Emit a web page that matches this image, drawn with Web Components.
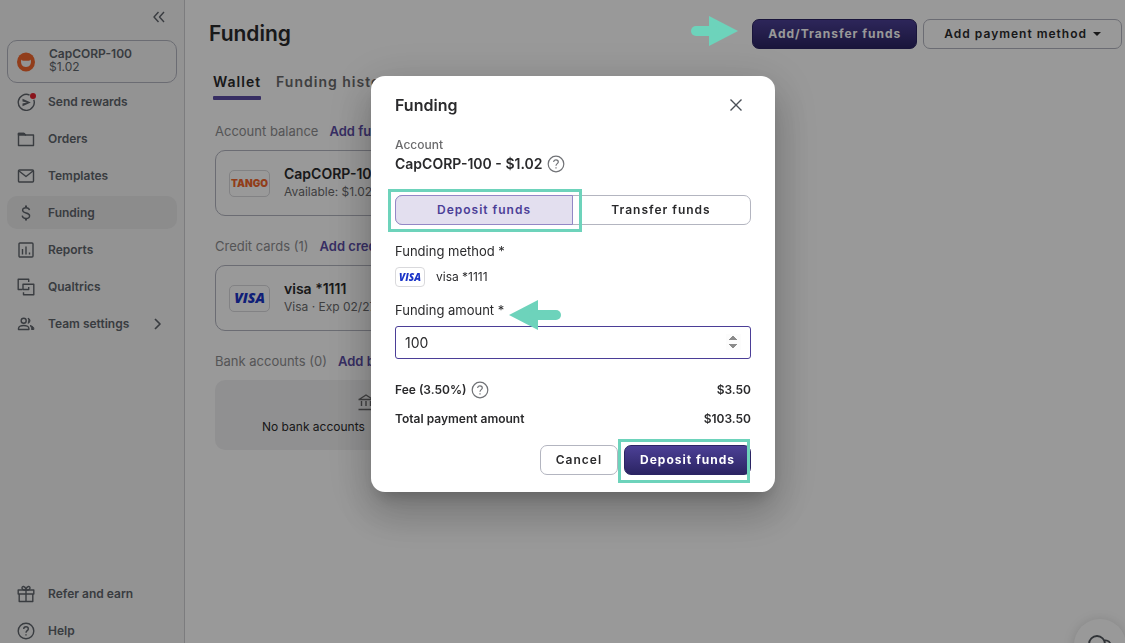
<!DOCTYPE html>
<html lang="en">
<head>
<meta charset="utf-8">
<meta name="viewport" content="width=device-width, initial-scale=1">
<title>Funding</title>
<style>
  :root {
    --ink: #2a2a2c;
    --muted: #6a6a6c;
    --faint: #8d8d90;
    --nav: #60656c;
    --brand: #4b3e97;
    --link: #5c4da6;
    --line: #b3b5c0;
    --mark: #6dd3bb;
  }
  html, body { margin: 0; height: 100%; overflow: hidden; background: #fff; }
  body { font: 400 13px/18px Inter, "Open Sans", sans-serif; color: var(--ink); }
</style>
</head>
<body>
<app-shell>
  <side-nav slot="side">
    <account-chip slot="account" name="CapCORP-100" balance="$1.02"></account-chip>
    <nav-item icon="send" alert>Send rewards</nav-item>
    <nav-item icon="folder">Orders</nav-item>
    <nav-item icon="mail">Templates</nav-item>
    <nav-item icon="dollar" active>Funding</nav-item>
    <nav-item icon="chart">Reports</nav-item>
    <nav-item icon="link">Qualtrics</nav-item>
    <nav-item icon="team" expandable>Team settings</nav-item>
    <nav-item slot="footer" icon="gift">Refer and earn</nav-item>
    <nav-item slot="footer" icon="help">Help</nav-item>
  </side-nav>
  <page-header>
    Funding
    <app-button slot="actions" primary>Add/Transfer funds</app-button>
    <app-button slot="actions" menu>Add payment method</app-button>
  </page-header>
  <tab-bar></tab-bar>
  <wallet-section label="Account balance" action="Add funds">
    <payment-card name="CapCORP-100" detail="Available: $1.02"><brand-badge brand="tango"></brand-badge></payment-card>
  </wallet-section>
  <wallet-section label="Credit cards (1)" action="Add credit">
    <payment-card name="visa *1111" detail="Visa · Exp 02/27"><brand-badge brand="visa"></brand-badge></payment-card>
  </wallet-section>
  <wallet-section label="Bank accounts (0)" action="Add bank">
    <empty-card>No bank accounts</empty-card>
  </wallet-section>
</app-shell>
<chat-launcher></chat-launcher>
<modal-layer>
  <funding-dialog></funding-dialog>
</modal-layer>
<pointer-arrow place="header"></pointer-arrow>

<script>
const ICONS = {
  send: '<path d="M12.600 2.100A8 8 0 1 0 16.800 6.700"/><path d="M5.500 5.800 13.800 9.500 5.500 13.200v-2.700l4.500-1-4.500-1z" fill="currentColor" stroke="none"/>',
  folder: '<path d="M1.500 3.500h5.500l1.500 1.500h8v10.500h-15z"/><path d="M1.500 3.500h5.500l1.500 1.500h-7z" fill="currentColor"/>',
  mail: '<rect x="1.500" y="3" width="15" height="12" rx="1"/><path d="m2 4 7 5.500L16 4"/>',
  dollar: '<path d="M12.500 6.200C12.200 4.500 10.800 3.700 9 3.700c-2 0-3.400 1-3.400 2.600C5.600 10 12.600 8 12.600 11.800c0 1.700-1.500 2.700-3.600 2.700s-3.500-1-3.800-2.800"/><path d="M9 1.500v2M9 14.500v2" stroke-width="2"/>',
  chart: '<rect x="2" y="2" width="14" height="14" rx="1"/><path d="M5.500 8v5.500M9 5.500v8M12.500 11.500v2"/>',
  link: '<path d="M5.500 11.500H1.200V1.200h10.500V4M6 11.800V6.200h10.800v10.500H6.500v-2.500"/><path d="M6 11.500h5.700V9"/>',
  team: '<circle cx="6.700" cy="5.700" r="2.500"/><path d="M1.500 14.500v-1c0-2 3-3 5.200-3s5.200 1 5.200 3v1z"/><path d="M11 3.100a2.700 2.700 0 0 1 0 5.200c1-1.500 1-3.700 0-5.200zM13 10.500c2 .4 3.800 1.300 3.800 3v1h-2.300v-1c0-1.200-.5-2.200-1.500-3z" fill="currentColor" stroke-width="1"/>',
  gift: '<path d="M1.200 5h15.600v4H1.200zM2.200 9v7.500h13.600V9M9 5v11.500"/><path d="M9 5C7 5 5 4.500 5 2.900 5 .8 8 .8 9 4.500 10 .8 13 .8 13 2.900 13 4.500 11 5 9 5z"/>',
  help: '<circle cx="9" cy="9" r="7.800"/><path d="M6.700 7.100C6.700 5.700 7.700 4.800 9 4.800s2.300.9 2.300 2.100C11.300 8.600 9 8.700 9 10.700"/><path d="M9 12.300v1.300"/>',
  bank: '<path d="M2 6.500 9 2l7 4.500M1.500 16.500h15M4.500 8v5M9 8v5M13.500 8v5M1.500 6.500h15"/>',
  right: '<path d="m6 4 5 5-5 5" stroke-width="1.700"/>',
  collapse: '<path d="M8.500 4 4 9l4.500 5M14 4 9.500 9l4.500 5"/>',
  close: '<path d="m3.500 3.500 11 11M14.500 3.500l-11 11"/>'
};
const icon = (name, size = 18) =>
  `<svg width="${size}" height="${size}" viewBox="0 0 18 18" fill="none" stroke="currentColor" stroke-width="1.400" stroke-linejoin="round" aria-hidden="true">${ICONS[name]}</svg>`;

function define(tag, render) {
  customElements.define(tag, class extends HTMLElement {
    connectedCallback() {
      if (this.shadowRoot) return;
      this.attachShadow({ mode: 'open' }).innerHTML =
        '<style>*{box-sizing:border-box}svg{display:block;flex:none}button,input{font:inherit;color:inherit}</style>' + render(this);
    }
  });
}

define('app-shell', () => `
  <style>
    :host { display: grid; grid-template-columns: 185px 1fr; height: 100vh; }
    main { padding: 19px 3px 0 24px; min-width: 0; }
  </style>
  <slot name="side"></slot><main><slot></slot></main>`);

define('side-nav', () => `
  <style>
    :host { display: flex; flex-direction: column; height: 100vh; box-sizing: border-box; padding: 8px 7px 0; background: #f5f5f5; border-right: 1px solid #cfcfd2; overflow: hidden; }
    .collapse { align-self: flex-end; margin: 0 9px 14px 0; padding: 0; border: 0; background: none; color: var(--nav); }
    nav { display: flex; flex-direction: column; gap: 4px; margin-top: 2px; }
    .footer { margin: auto 0 -4px; }
  </style>
  <button class="collapse" aria-label="Collapse menu">${icon('collapse')}</button>
  <slot name="account"></slot>
  <nav><slot></slot></nav>
  <nav class="footer" aria-label="More"><slot name="footer"></slot></nav>`);

define('account-chip', el => `
  <style>
    :host { display: block; }
    button { display: flex; align-items: center; gap: 14px; width: 100%; height: 43px; padding: 0 9px; border: 1px solid var(--line); border-radius: 10px; background: none; text-align: left; color: var(--nav); }
    span { display: block; font-size: 12px; line-height: 13px; }
    .text { padding-bottom: 3px; }
    .name { font-weight: 600; }
  </style>
  <button>
    <svg width="18" height="20" viewBox="0 0 18 20" aria-hidden="true"><ellipse cx="9" cy="10" rx="9" ry="9.500" fill="#f2672d"/><path d="M4.200 7.500c1 1.500 2.500 1.200 4.800 1.200s3.800.3 4.800-1.200c.8 4.500-1 7.500-4.800 7.500s-5.600-3-4.800-7.500z" fill="#f5f5f5"/></svg>
    <span class="text"><span class="name">${el.getAttribute('name')}</span><span>${el.getAttribute('balance')}</span></span>
  </button>`);

define('nav-item', el => `
  <style>
    :host { display: block; }
    a { position: relative; display: flex; align-items: center; gap: 13px; height: 33px; padding: 0 10px; border-radius: 10px; color: var(--nav); font-weight: 600; font-size: 12px; text-decoration: none; }
    :host([active]) a { background: #e9e9ea; }
    .more { margin-left: auto; }
    .dot { position: absolute; left: 23px; top: 8px; width: 6px; height: 6px; border-radius: 50%; background: #e5202e; }
  </style>
  <a href="#" ${el.hasAttribute('active') ? 'aria-current="page"' : ''}>${icon(el.getAttribute('icon'))}<slot></slot>
  ${el.hasAttribute('alert') ? '<i class="dot"></i>' : ''}${el.hasAttribute('expandable') ? `<span class="more">${icon('right')}</span>` : ''}</a>`);

define('page-header', () => `
  <style>
    :host { display: flex; align-items: center; gap: 6px; height: 30px; }
    h1 { margin: 0 auto 0 0; font-size: 21px; line-height: 30px; font-weight: 600; }
  </style>
  <h1><slot></slot></h1><slot name="actions"></slot>`);

define('app-button', el => `
  <style>
    :host { display: block; }
    button { display: flex; align-items: center; gap: 6px; height: 30px; padding: 0 15px; border: 1px solid var(--line); border-radius: 7px; background: #fff; font-size: 12px; font-weight: 600; letter-spacing: 1px; white-space: nowrap; }
    :host([menu]) button { padding: 0 20px; }
    :host([primary]) button { border-color: #2b2463; background: linear-gradient(#4c4096, #2b2463); color: #fff; font-weight: 700; }
  </style>
  <button type="button"><slot></slot>${el.hasAttribute('menu') ? '<svg width="8" height="4" viewBox="0 0 8 4" aria-hidden="true"><path d="M0 0h8L4 4z" fill="currentColor"/></svg>' : ''}</button>`);

define('tab-bar', () => `
  <style>
    :host { display: flex; gap: 15px; margin: 21px 0 0 4px; padding-bottom: 1px; }
    button { height: 30px; padding: 2px 0 8px; border: 0; background: none; color: var(--muted); font-size: 14px; font-weight: 600; line-height: 20px; letter-spacing: 1px; }
    [aria-selected=true] { color: var(--ink); }
    [aria-selected=true]::after { content: ""; display: block; height: 4px; margin-top: 4px; border-radius: 1px; background: var(--link); }
  </style>
  <button role="tab" aria-selected="true">Wallet</button><button role="tab" aria-selected="false">Funding history</button>`);

define('wallet-section', el => `
  <style>
    :host { display: block; width: 302px; margin: 21px 0 0 6px; }
    header { display: flex; gap: 11px; margin-bottom: 10px; color: var(--faint); }
    a { color: var(--link); font-weight: 600; text-decoration: none; }
  </style>
  <header><span>${el.getAttribute('label')}</span><a href="#">${el.getAttribute('action')}</a></header><slot></slot>`);

define('payment-card', el => `
  <style>
    :host { display: flex; align-items: center; gap: 14px; height: 66px; box-sizing: border-box; padding: 0 13px; border: 1px solid var(--line); border-radius: 10px; }
    b, span { display: block; }
    b { font-weight: 600; font-size: 14px; }
    span { color: var(--muted); font-size: 12px; }
  </style>
  <slot></slot><div><b>${el.getAttribute('name')}</b><span>${el.getAttribute('detail')}</span></div>`);

define('brand-badge', el => {
  const tango = el.getAttribute('brand') === 'tango';
  return `
  <style>
    :host { display: flex; align-items: center; justify-content: center; flex: none; width: 41px; height: 27px; box-sizing: border-box; border: 1px solid #d9d9dc; border-radius: 5px; font: italic 800 14px/18px "Open Sans", sans-serif; color: #1a34c8; }
    :host([brand=tango]) { font: 900 10px/14px Inter, sans-serif; color: #f2672d; }
    :host([small]) { width: 30px; height: 20px; font-size: 10px; border-radius: 4px; }
  </style>
  <span>${tango ? 'TANGO' : 'VISA'}</span>`;
});

define('empty-card', () => `
  <style>
    :host { display: flex; flex-direction: column; align-items: center; gap: 7px; height: 70px; box-sizing: border-box; padding-top: 13px; border-radius: 10px; background: #f1f1f2; }
    svg { color: var(--muted); }
    span { width: 208px; font-size: 12px; }
  </style>
  ${icon('bank')}<span><slot></slot></span>`);

define('chat-launcher', () => `
  <style>
    :host { position: fixed; right: -1px; bottom: -28px; }
    button { display: grid; place-items: center; width: 52px; height: 52px; padding: 0; border: 0; border-radius: 50%; background: #fff; color: #50565c; box-shadow: 0 1px 12px rgba(0,0,0,.15); }
  </style>
  <button aria-label="Open chat"><svg width="26" height="22" viewBox="0 0 26 22" fill="none" stroke="currentColor" stroke-width="1.800"><path d="M2 18v-8a8 8 0 1 1 8 8z"/><path d="M17 6.500c4-1 7 2 7 6V21h-8c-2 0-4-1-5-3"/></svg></button>`);

define('modal-layer', () => `
  <style>
    :host { position: fixed; inset: 0; display: flex; justify-content: center; align-items: flex-start; padding: 76px 0 0 21px; background: rgba(0,0,0,.4); }
  </style>
  <slot></slot>`);

define('help-tip', () => `
  <style>
    :host { display: block; }
    button { display: block; padding: 0; border: 0; background: none; color: #707276; }
    svg { stroke-width: 1.200; }
  </style>
  <button type="button" aria-label="More information">${icon('help')}</button>`);

define('pointer-arrow', el => {
  const header = el.getAttribute('place') === 'header';
  return `
  <style>
    :host { position: absolute; left: 114px; top: -1px; pointer-events: none; color: var(--mark); }
    :host([place=header]) { position: fixed; left: auto; top: 16px; right: 387px; }
  </style>
  ${header
    ? '<svg width="47" height="30" fill="currentColor" aria-hidden="true"><path d="M47 15 18 0v30z"/><rect y="10" width="28" height="10" rx="5"/></svg>'
    : '<svg width="52" height="30" fill="currentColor" aria-hidden="true"><path d="M0 15 29 0v30z"/><rect x="20" y="10" width="32" height="10" rx="5"/></svg>'}`;
});

define('mark-frame', () => `
  <style>
    :host { position: absolute; inset: -6px -9px -7px -7px; border: 3px solid var(--mark); pointer-events: none; }
    :host([around=button]) { inset: -6px 1px -8px -6px; }
  </style>`);

define('funding-dialog', () => `
  <style>
    :host { display: block; box-sizing: border-box; width: 404px; padding: 18px 24px 17px; border-radius: 14px; background: #fff; box-shadow: 0 11px 15px -7px rgba(0,0,0,.2), 0 24px 38px 3px rgba(0,0,0,.14), 0 9px 46px 8px rgba(0,0,0,.12); }
    header { display: flex; justify-content: space-between; align-items: center; height: 22px; }
    h2 { margin: 0; font-size: 16px; line-height: 22px; font-weight: 600; }
    .close { padding: 0 6px 0 0; border: 0; background: none; color: #4a4f57; }
    .muted { margin-top: 20px; color: var(--muted); font-weight: 500; font-size: 12px; }
    .line { display: flex; align-items: center; gap: 5px; height: 20px; font-size: 14px; font-weight: 600; }
    .switch { display: flex; height: 30px; margin-top: 21px; border: 1px solid var(--line); border-radius: 7px; }
    .seg { position: relative; flex: 1; margin: -1px 0 -1px -1px; }
    .seg button { width: 100%; height: 30px; padding: 0; border: 0; background: none; font-size: 12px; font-weight: 600; letter-spacing: 1px; }
    .seg button[aria-pressed=true] { border: 1px solid #9387c6; border-radius: 7px 0 0 7px; background: #e3dfef; color: var(--brand); }
    .label { display: block; position: relative; margin-top: 17px; }
    .method { display: flex; align-items: center; gap: 11px; height: 20px; margin-top: 7px; font-size: 12px; }
    .entry { margin-top: 14px; }
    input { display: block; width: 100%; height: 33px; margin-top: 7px; padding: 0 9px; border: 1px solid var(--brand); border-radius: 3px; outline: 0; background: #fff; font-size: 14px; }
    input::-webkit-inner-spin-button { opacity: 1; }
    .fee { margin-top: 21px; }
    .total { margin-top: 9px; }
    .fee, .total { font-size: 12px; }
    .value { margin-left: auto; }
    footer { display: flex; justify-content: flex-end; gap: 6px; margin-top: 16px; }
    .submit { position: relative; }
  </style>
  <section role="dialog" aria-labelledby="title">
    <header><h2 id="title">Funding</h2><button class="close" type="button" aria-label="Close">${icon('close')}</button></header>
    <div class="muted">Account</div>
    <div class="line"><span>CapCORP-100 - $1.02</span><help-tip></help-tip></div>
    <div class="switch">
      <div class="seg"><button type="button" aria-pressed="true">Deposit funds</button><mark-frame></mark-frame></div>
      <div class="seg"><button type="button" aria-pressed="false">Transfer funds</button></div>
    </div>
    <div class="label">Funding method *</div>
    <div class="method"><brand-badge brand="visa" small></brand-badge><span>visa *1111</span></div>
    <div class="label entry"><label for="amount">Funding amount *</label><pointer-arrow></pointer-arrow></div>
    <input id="amount" type="number" value="100">
    <div class="line fee"><span>Fee (3.50%)</span><help-tip></help-tip><span class="value">$3.50</span></div>
    <div class="line total"><span>Total payment amount</span><span class="value">$103.50</span></div>
    <footer><app-button>Cancel</app-button><div class="submit"><app-button primary>Deposit funds</app-button><mark-frame around="button"></mark-frame></div></footer>
  </section>`);
</script>
</body>
</html>
